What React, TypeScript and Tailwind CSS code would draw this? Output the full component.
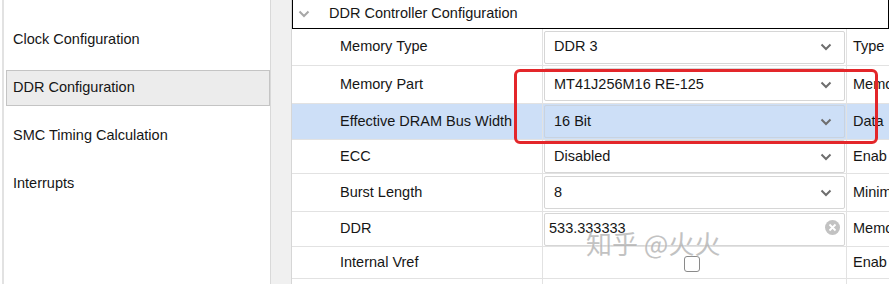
import React from "react";

const Chevron = ({ className = "" }: { className?: string }) => (
  <svg width="12" height="8" viewBox="0 0 12 8" className={className}>
    <path d="M1.5 1.5 L6 6 L10.5 1.5" fill="none" stroke="#6e6e6e" strokeWidth="2" />
  </svg>
);

type Row = {
  label: string;
  h: number;
  kind: "select" | "input" | "check" | "none";
  value?: string;
  desc: string;
  selected?: boolean;
};

const rows: Row[] = [
  { label: "Memory Type", h: 37, kind: "select", value: "DDR 3", desc: "Type" },
  { label: "Memory Part", h: 38, kind: "select", value: "MT41J256M16 RE-125", desc: "Memo" },
  { label: "Effective DRAM Bus Width", h: 36, kind: "select", value: "16 Bit", desc: "Data", selected: true },
  { label: "ECC", h: 34, kind: "select", value: "Disabled", desc: "Enab" },
  { label: "Burst Length", h: 38, kind: "select", value: "8", desc: "Minim" },
  { label: "DDR", h: 35, kind: "input", value: "533.333333", desc: "Memo" },
  { label: "Internal Vref", h: 32, kind: "check", desc: "Enab" },
  { label: "", h: 30, kind: "select", value: "", desc: "" },
];

export default function App() {
  return (
    <div className="relative flex h-[284px] w-[889px] overflow-hidden bg-white font-['Liberation_Sans',Arial,sans-serif] text-[14.5px] text-[#161616]">
      {/* Left nav */}
      <div className="ml-[2px] flex w-[268px] flex-col gap-[12px] border-l-2 border-[#e2e2e2] pt-[22px]">
        {["Clock Configuration", "DDR Configuration", "SMC Timing Calculation", "Interrupts"].map((t) => (
          <div
            key={t}
            className={
              "ml-[2px] flex h-[36px] items-center pl-[6px] " +
              (t === "DDR Configuration"
                ? "border border-[#c4c4c4] bg-[#ececec]"
                : "border border-transparent")
            }
          >
            {t}
          </div>
        ))}
      </div>

      {/* Splitter */}
      <div className="w-[21px] border-l border-[#d9d9d9] bg-[#f0f0f0]" />

      {/* Right table */}
      <div className="flex flex-1 flex-col border-l border-[#d6d6d6]">
        <div className="flex h-[29px] shrink-0 items-center border border-t-0 border-black bg-white">
          <Chevron className="ml-[5px] opacity-60" />
          <span className="ml-[19px]">DDR Controller Configuration</span>
        </div>
        {rows.map((r, i) => (
          <div
            key={i}
            style={{ height: r.h }}
            className={
              "grid shrink-0 grid-cols-[250px_304px_1fr] border-b border-[#e2e2e2] " +
              (r.selected ? "bg-[#cddff7]" : "bg-white")
            }
          >
            <div className="flex items-center pl-[48px]">{r.label}</div>
            <div className="flex items-center border-l border-[#e2e2e2] px-[1px]">
              {r.kind === "select" && (
                <div
                  className={
                    "flex h-[33px] w-full items-center justify-between rounded-[2px] border pl-[9px] pr-[12px] " +
                    (r.selected ? "border-[#c9d3e0] bg-[#cddff7]" : "border-[#d6d6d6] bg-white") +
                    (i === rows.length - 1 ? " mt-[8px] self-start" : "")
                  }
                >
                  <span>{r.value}</span>
                  <Chevron />
                </div>
              )}
              {r.kind === "input" && (
                <div className="relative flex h-[33px] w-full items-center rounded-[2px] border border-[#d6d6d6] bg-white pl-[4px]">
                  <span>{r.value}</span>
                  <span className="absolute right-[4px] top-[6px] flex h-[15px] w-[15px] items-center justify-center rounded-full bg-[#c2c2c2]">
                    <svg width="9" height="9" viewBox="0 0 9 9">
                      <path d="M1.5 1.5 L7.5 7.5 M7.5 1.5 L1.5 7.5" stroke="white" strokeWidth="1.8" />
                    </svg>
                  </span>
                </div>
              )}
              {r.kind === "check" && (
                <div className="flex w-full justify-center pr-[6px] pt-[2px]">
                  <div className="h-[16px] w-[16px] rounded-[3px] border border-[#8a8a8a] bg-white" />
                </div>
              )}
            </div>
            <div className="flex items-center overflow-hidden whitespace-nowrap border-l border-[#e2e2e2] pl-[6px]">
              {r.desc}
            </div>
          </div>
        ))}
      </div>

      {/* Red highlight box */}
      <div className="pointer-events-none absolute left-[514px] top-[69px] h-[75px] w-[364px] rounded-[6px] border-[3px] border-[#e3262a]" />

      {/* Watermark */}
      <div className="pointer-events-none absolute left-[586px] top-[226px] font-['Noto_Sans_CJK_SC',sans-serif] text-[26px] leading-[34px] text-[#b4b4b4] opacity-80 [text-shadow:0_0_2px_white]">
        知乎 @火火
      </div>
    </div>
  );
}
